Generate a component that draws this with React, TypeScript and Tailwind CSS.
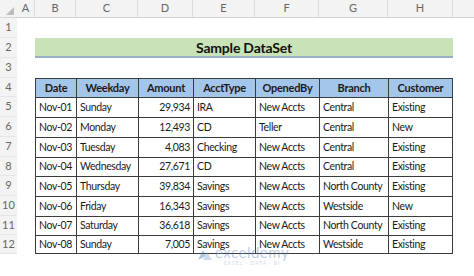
import React from "react";

const COLS = [
  { key: "A", w: "w-[18px]" },
  { key: "B", w: "w-[41px]" },
  { key: "C", w: "w-[62px]" },
  { key: "D", w: "w-[55px]" },
  { key: "E", w: "w-[62px]" },
  { key: "F", w: "w-[64px]" },
  { key: "G", w: "w-[69px]" },
  { key: "H", w: "w-[65px]" },
];

const HEAD = ["Date", "Weekday", "Amount", "AcctType", "OpenedBy", "Branch", "Customer"];

const DATA = [
  ["Nov-01", "Sunday", "29,934", "IRA", "New Accts", "Central", "Existing"],
  ["Nov-02", "Monday", "12,493", "CD", "Teller", "Central", "New"],
  ["Nov-03", "Tuesday", "4,083", "Checking", "New Accts", "Central", "Existing"],
  ["Nov-04", "Wednesday", "27,671", "CD", "New Accts", "Central", "Existing"],
  ["Nov-05", "Thursday", "39,834", "Savings", "New Accts", "North County", "Existing"],
  ["Nov-06", "Friday", "16,343", "Savings", "New Accts", "Westside", "New"],
  ["Nov-07", "Saturday", "36,618", "Savings", "New Accts", "North County", "Existing"],
  ["Nov-08", "Sunday", "7,005", "Savings", "New Accts", "Westside", "Existing"],
];

// row heights for rows 1..12
const ROW_H = [
  "h-[20px]", "h-[20px]", "h-[20px]", "h-[19px]", "h-[20px]", "h-[20px]",
  "h-[20px]", "h-[19px]", "h-[20px]", "h-[20px]", "h-[19px]", "h-[19px]",
];

const DATA_W = COLS.slice(1).map((c) => c.w);

function RowNum({ n, h }: { n?: number; h: string }) {
  return (
    <div
      className={`${h} w-[17px] shrink-0 flex items-center justify-center bg-[#f3f3f3] border-b border-[#e6e6e6] text-[11px] text-[#666]`}
    >
      {n}
    </div>
  );
}

function TableRow({ cells, head, last }: { cells: string[]; head?: boolean; last?: boolean }) {
  return (
    <div className="flex h-full">
      {cells.map((c, i) => (
        <div
          key={i}
          className={`${DATA_W[i]} ${head ? "bg-[#a3c6ea] font-bold justify-center text-[11px] tracking-[-0.25px]" : i === 2 ? "justify-end pr-[3px] text-[10.5px] tracking-[-0.35px]" : "pl-[3px] text-[10.5px] tracking-[-0.35px]"} ${i === 6 ? "border-r" : ""} ${last ? "border-b" : ""} shrink-0 flex items-center border-l border-t border-[#3c3c3c] text-[#1a1a1a] whitespace-nowrap overflow-hidden h-full`}
        >
          {c}
        </div>
      ))}
    </div>
  );
}

function Watermark() {
  return (
    <div className="absolute left-[198px] top-[245px] flex items-start gap-[3px] opacity-40">
      <svg width="14" height="12" viewBox="0 0 14 12" className="mt-[3px]">
        <path d="M0 12 L5 2 L8 8 Z" fill="#3f6fa8" />
        <path d="M5 12 L9 4 L14 12 Z" fill="#7fa6d3" />
      </svg>
      <div className="flex flex-col items-center leading-none">
        <span className="text-[15px] text-[#5f86b8] tracking-[0.5px]">exceldemy</span>
        <span className="text-[5px] text-[#8ca4c2] tracking-[1px] mt-[1px]">EXCEL · DATA · BI</span>
      </div>
    </div>
  );
}

export default function App() {
  return (
    <div
      className="relative w-[474px] h-[276px] overflow-hidden bg-white"
      style={{ fontFamily: "Lato, 'Liberation Sans', sans-serif" }}
    >
      {/* column letters */}
      <div className="flex h-[18px] bg-[#f3f3f3] border-b border-[#d4d4d4]">
        <div className="w-[17px] shrink-0 relative">
          <svg width="17" height="18" className="absolute inset-0">
            <path d="M14 7 L14 15 L6 15 Z" fill="#bdbdbd" />
          </svg>
        </div>
        {COLS.map((c) => (
          <div
            key={c.key}
            className={`${c.w} shrink-0 flex items-center justify-center border-r border-[#dcdcdc] text-[11px] text-[#666]`}
          >
            {c.key}
          </div>
        ))}
        <div className="flex-1" />
      </div>

      <div className="flex">
        <div className="flex flex-col">
          {ROW_H.map((h, i) => (
            <RowNum key={i} n={i + 1} h={h} />
          ))}
          <div className="flex-1 h-[30px] bg-[#f3f3f3]" />
        </div>

        <div className="flex flex-col">
          <div className={ROW_H[0]} />
          {/* title bar */}
          <div className={`${ROW_H[1]} flex`}>
            <div className="w-[18px] shrink-0" />
            <div className="w-[418px] flex items-center justify-center bg-[#c9e2b8] border-b-2 border-[#98afc6] text-[14px] font-bold tracking-[-0.2px] text-[#111]">
              Sample DataSet
            </div>
          </div>
          <div className={ROW_H[2]} />
          <div className="flex">
            <div className="w-[18px] shrink-0" />
            <div className="flex flex-col">
              <div className={ROW_H[3]}>
                <TableRow cells={HEAD} head />
              </div>
              {DATA.map((r, i) => (
                <div key={i} className={ROW_H[4 + i]}>
                  <TableRow cells={r} last={i === DATA.length - 1} />
                </div>
              ))}
            </div>
          </div>
        </div>
      </div>

      <Watermark />
    </div>
  );
}
